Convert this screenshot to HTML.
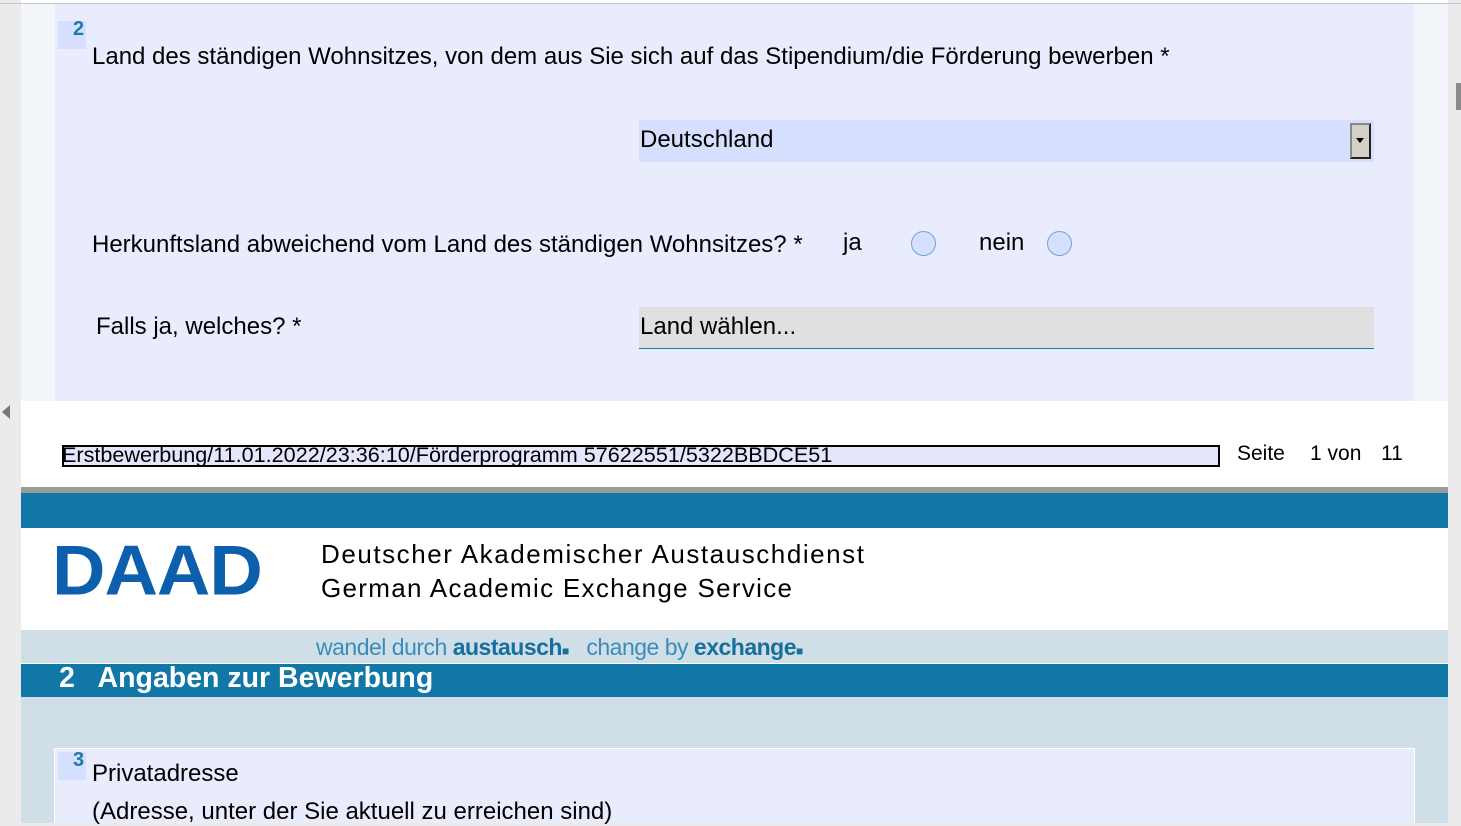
<!DOCTYPE html>
<html><head><meta charset="utf-8"><style>
*{margin:0;padding:0;box-sizing:border-box}
body{width:1461px;height:823px;overflow:hidden;background:#ebebeb;font-family:"Liberation Sans",sans-serif;position:relative;color:#000}
.a{position:absolute;white-space:nowrap}
.t{font-size:24px}
</style></head><body>
<div class="a" style="left:21px;top:0;width:1427px;height:823px;background:#fff"></div>
<div class="a" style="left:0;top:3px;width:1461px;height:1px;background:#c8c8c8"></div>
<div class="a" style="left:21px;top:4px;width:1427px;height:397px;background:#f2f5fa"></div>
<div class="a" style="left:55px;top:4px;width:1359px;height:397px;background:#e9ecfd"></div>
<div class="a" style="left:1456px;top:83px;width:5px;height:27px;background:#8a8a8a"></div>
<div class="a" style="left:2px;top:405px;width:0;height:0;border-top:7px solid transparent;border-bottom:7px solid transparent;border-right:8px solid #777"></div>

<div class="a" style="left:58px;top:21px;width:28px;height:28px;background:#d6dffd"></div>
<div class="a" style="left:73px;top:18px;font-size:20px;font-weight:bold;color:#1a7aa8">2</div>
<div class="a t" style="left:92px;top:43px">Land des ständigen Wohnsitzes, von dem aus Sie sich auf das Stipendium/die Förderung bewerben *</div>

<div class="a" style="left:639px;top:120px;width:735px;height:42px;background:#d6dffd"></div>
<div class="a t" style="left:640px;top:126px">Deutschland</div>
<div class="a" style="left:1350px;top:123px;width:21px;height:36px;background:#d4d0c8;border:2px solid #222;border-top-color:#888;border-left-color:#888"></div>
<div class="a" style="left:1356px;top:138px;width:0;height:0;border-left:4px solid transparent;border-right:4px solid transparent;border-top:5px solid #000"></div>

<div class="a t" style="left:92px;top:231px">Herkunftsland abweichend vom Land des ständigen Wohnsitzes? *</div>
<div class="a t" style="left:843px;top:229px">ja</div>
<div class="a" style="left:911px;top:231px;width:25px;height:25px;border-radius:50%;background:#d6dffd;border:1px solid #6aa7cc"></div>
<div class="a t" style="left:979px;top:229px">nein</div>
<div class="a" style="left:1047px;top:231px;width:25px;height:25px;border-radius:50%;background:#d6dffd;border:1px solid #6aa7cc"></div>

<div class="a t" style="left:96px;top:313px">Falls ja, welches? *</div>
<div class="a" style="left:639px;top:307px;width:735px;height:42px;background:#e0e0e0;border-bottom:1px solid #1a7aa8"></div>
<div class="a t" style="left:640px;top:313px">Land wählen...</div>

<div class="a" style="left:62px;top:445px;width:1158px;height:22px;background:#e3e6fd;border:2px solid #000"></div>
<div class="a" style="left:62px;top:442px;font-size:21.6px">Erstbewerbung/11.01.2022/23:36:10/Förderprogramm 57622551/5322BBDCE51</div>
<div class="a" style="left:1237px;top:442px;font-size:21px">Seite</div>
<div class="a" style="left:1310px;top:442px;font-size:21px">1 von</div>
<div class="a" style="left:1381px;top:442px;font-size:21px">11</div>

<div class="a" style="left:21px;top:487px;width:1427px;height:6px;background:#9c9c9c"></div>
<div class="a" style="left:21px;top:493px;width:1427px;height:35px;background:#1177a6"></div>
<div class="a" style="left:21px;top:528px;width:1427px;height:102px;background:#fff"></div>
<div class="a" style="left:52px;top:530px;font-size:74px;font-weight:bold;color:#0b5fac;letter-spacing:-1px;transform:scaleY(0.95);transform-origin:top">DAAD</div>
<div class="a" style="left:321px;top:539px;font-size:26px;letter-spacing:1.55px">Deutscher Akademischer Austauschdienst</div>
<div class="a" style="left:321px;top:573px;font-size:26px;letter-spacing:1.3px">German Academic Exchange Service</div>
<div class="a" style="left:21px;top:630px;width:1427px;height:33px;background:#d0dee8"></div>
<div class="a" style="left:316px;top:634px;font-size:23px;color:#3a8db8;letter-spacing:-0.5px">wandel durch <b style="color:#176f9c">austausch</b><span style="font-size:12px;color:#176f9c">■</span>&nbsp;&nbsp; change by <b style="color:#176f9c">exchange</b><span style="font-size:12px;color:#176f9c">■</span></div>
<div class="a" style="left:21px;top:664px;width:1427px;height:33px;background:#1177a6"></div>
<div class="a" style="left:59px;top:662px;font-size:28.5px;font-weight:bold;color:#fff">2&nbsp;&nbsp; Angaben zur Bewerbung</div>
<div class="a" style="left:21px;top:697px;width:1427px;height:126px;background:#d0dee8"></div>
<div class="a" style="left:54px;top:748px;width:1361px;height:75px;background:#e9ecfd;border:1px solid #fff;border-bottom:none"></div>
<div class="a" style="left:58px;top:752px;width:28px;height:28px;background:#d6dffd"></div>
<div class="a" style="left:73px;top:749px;font-size:20px;font-weight:bold;color:#1a7aa8">3</div>
<div class="a t" style="left:92px;top:760px">Privatadresse</div>
<div class="a t" style="left:92px;top:798px">(Adresse, unter der Sie aktuell zu erreichen sind)</div>
</body></html>
